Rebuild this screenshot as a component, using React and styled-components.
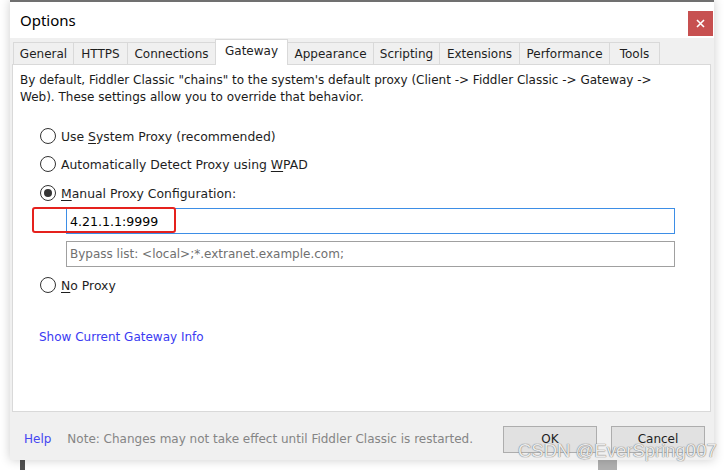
import styled, { createGlobalStyle } from 'styled-components';

const GlobalStyle = createGlobalStyle`
  html, body { margin: 0; padding: 0; background: #fff; }
  body {
    width: 725px;
    height: 470px;
    overflow: hidden;
    font-family: "DejaVu Sans", "Liberation Sans", sans-serif;
    -webkit-font-smoothing: antialiased;
  }
`;

const Desktop = styled.div`
  position: relative;
  width: 725px;
  height: 470px;
  background: #fff;
  overflow: hidden;
`;

const BackBar = styled.div`
  position: absolute;
  top: 458px;
  left: ${(p) => p.left}px;
  width: ${(p) => p.width}px;
  height: 12px;
  background: ${(p) => p.color};
`;

const Window = styled.div`
  position: relative;
  z-index: 1;
  margin-left: 10px;
  width: 704px;
  height: 460px;
  box-sizing: border-box;
  display: flex;
  flex-direction: column;
  background: #f0f0f0;
  border-top: 2px solid #707070;
  box-shadow: 0 0 10px rgba(0, 0, 0, 0.2);
`;

const TitleBar = styled.div`
  height: 36px;
  display: flex;
  align-items: center;
  justify-content: space-between;
  padding-left: 10px;
  background: #fff;
`;

const Title = styled.span`
  font-family: "Noto Sans", "Open Sans", sans-serif;
  font-size: 15px;
  color: #000;
  margin-top: -1px;
`;

const CloseButton = styled.div`
  width: 25px;
  height: 25px;
  margin: 6px 1px 0 0;
  display: flex;
  align-items: center;
  justify-content: center;
  background: #c75050;
`;

const TabStrip = styled.div`
  height: 26px;
  display: flex;
  align-items: flex-end;
  padding-left: 3px;
  position: relative;
  z-index: 2;
`;

const Tab = styled.div`
  box-sizing: border-box;
  width: ${(p) => p.width + 1}px;
  height: ${(p) => (p.active ? 26 : 22)}px;
  margin-right: -1px;
  margin-bottom: ${(p) => (p.active ? -1 : 0)}px;
  position: relative;
  z-index: ${(p) => (p.active ? 2 : 1)};
  display: flex;
  align-items: center;
  justify-content: center;
  padding-bottom: ${(p) => (p.active ? 3 : 0)}px;
  border: 1px solid #d9d9d9;
  border-bottom: none;
  background: ${(p) => (p.active ? '#fff' : '#f0f0f0')};
  font-size: 12px;
  color: #1e1e1e;
`;

const Panel = styled.div`
  flex: 1;
  margin: 0 3px 0 2px;
  box-sizing: border-box;
  background: #fff;
  border: 1px solid #d9d9d9;
  padding: 7px 8px 0 7px;
  display: flex;
  flex-direction: column;
`;

const Description = styled.p`
  margin: 0;
  font-size: 12px;
  line-height: 17px;
  color: #1a1a1a;
`;

const RadioRow = styled.label`
  display: flex;
  align-items: center;
  height: 20px;
  margin-top: ${(p) => p.gap}px;
  padding-left: 20px;
  font-size: 12.4px;
  color: #1e1e1e;
`;

const RadioCircle = styled.span`
  width: 16px;
  height: 16px;
  box-sizing: border-box;
  border-radius: 50%;
  border: 1px solid #333;
  background: #fff;
  margin-right: 5px;
  display: flex;
  align-items: center;
  justify-content: center;

  &::after {
    content: '';
    width: 8px;
    height: 8px;
    border-radius: 50%;
    background: #333;
    display: ${(p) => (p.checked ? 'block' : 'none')};
  }
`;

const Key = styled.span`
  text-decoration: underline;
  text-underline-offset: 2px;
`;

const FieldRow = styled.div`
  position: relative;
  margin-top: ${(p) => p.gap}px;
  padding-left: 46px;
`;

const Field = styled.div`
  box-sizing: border-box;
  width: 609px;
  height: 26px;
  display: flex;
  align-items: center;
  padding-left: 3px;
  border: 1px solid ${(p) => (p.focused ? '#3d8ee6' : '#a0a0a0')};
  font-size: ${(p) => (p.placeholder ? 12 : 12.6)}px;
  color: ${(p) => (p.placeholder ? '#707070' : '#000')};
`;

const Highlight = styled.div`
  position: absolute;
  left: 12px;
  top: -1px;
  width: 144px;
  height: 26px;
  box-sizing: border-box;
  border: 2px solid #e5211d;
  border-radius: 3px;
`;

const Link = styled.a`
  margin-top: ${(p) => p.gap}px;
  padding-left: 19px;
  font-size: 12px;
  color: #3a3af2;
  text-decoration: none;
`;

const Footer = styled.div`
  height: 48px;
  box-sizing: border-box;
  padding: 6px 9px 0 14px;
  display: flex;
  align-items: center;
`;

const HelpLink = styled.a`
  font-size: 12px;
  color: #4646f0;
  text-decoration: none;
`;

const Note = styled.span`
  margin-left: 16px;
  font-size: 12px;
  color: #858585;
`;

const Buttons = styled.div`
  margin-left: auto;
  display: flex;
  gap: 14px;
`;

const Button = styled.div`
  width: 94px;
  height: 27px;
  box-sizing: border-box;
  display: flex;
  align-items: center;
  justify-content: center;
  background: #e1e1e1;
  border: 1px solid #adadad;
  font-size: 12px;
  color: #1e1e1e;
`;

const Watermark = styled.div`
  position: absolute;
  z-index: 3;
  left: 518px;
  top: 440px;
  white-space: nowrap;
  font-family: "Liberation Sans", Arial, sans-serif;
  font-size: 18.5px;
  color: rgba(255, 255, 255, 0.85);
  text-shadow: 0 0 1px #777, 0 0 1px #777;
`;

const tabs = [
  { label: 'General', width: 60 },
  { label: 'HTTPS', width: 54 },
  { label: 'Connections', width: 88 },
  { label: 'Gateway', width: 72, active: true },
  { label: 'Appearance', width: 86 },
  { label: 'Scripting', width: 66 },
  { label: 'Extensions', width: 80 },
  { label: 'Performance', width: 90 },
  { label: 'Tools', width: 50 },
];

const App = () => {
  return (
    <Desktop>
      <GlobalStyle />
      <BackBar left={20} width={5} color="#505050" />
      <BackBar left={598} width={19} color="#b0b0b0" />

      <Window>
        <TitleBar>
          <Title>Options</Title>
          <CloseButton>
            <svg width="9" height="9" viewBox="0 0 9 9">
              <path d="M1 1L8 8M8 1L1 8" stroke="#fff" strokeWidth="1.6" />
            </svg>
          </CloseButton>
        </TitleBar>

        <TabStrip>
          {tabs.map((t) => (
            <Tab key={t.label} width={t.width} active={t.active}>
              {t.label}
            </Tab>
          ))}
        </TabStrip>

        <Panel>
          <Description>
            By default, Fiddler Classic "chains" to the system's default proxy (Client -&gt; Fiddler Classic -&gt; Gateway -&gt;
            <br />
            Web). These settings allow you to override that behavior.
          </Description>

          <RadioRow gap={20}>
            <RadioCircle />
            <span>Use <Key>S</Key>ystem Proxy (recommended)</span>
          </RadioRow>
          <RadioRow gap={8}>
            <RadioCircle />
            <span>Automatically Detect Proxy using <Key>W</Key>PAD</span>
          </RadioRow>
          <RadioRow gap={9}>
            <RadioCircle checked />
            <span><Key>M</Key>anual Proxy Configuration:</span>
          </RadioRow>

          <FieldRow gap={5}>
            <Field focused>4.21.1.1:9999</Field>
            <Highlight />
          </FieldRow>
          <FieldRow gap={7}>
            <Field placeholder>Bypass list: &lt;local&gt;;*.extranet.example.com;</Field>
          </FieldRow>

          <RadioRow gap={8}>
            <RadioCircle />
            <span><Key>N</Key>o Proxy</span>
          </RadioRow>

          <Link gap={35}>Show Current Gateway Info</Link>
        </Panel>

        <Footer>
          <HelpLink>Help</HelpLink>
          <Note>Note: Changes may not take effect until Fiddler Classic is restarted.</Note>
          <Buttons>
            <Button>OK</Button>
            <Button>Cancel</Button>
          </Buttons>
        </Footer>
      </Window>

      <Watermark>CSDN @EverSpring007</Watermark>
    </Desktop>
  );
};

export default App;
